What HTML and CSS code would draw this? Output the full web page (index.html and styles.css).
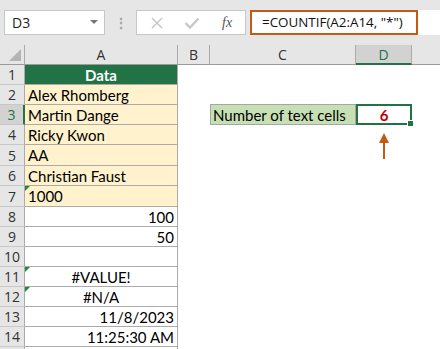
FILE: index.html
```html
<!DOCTYPE html>
<html lang="en">
  <head>
    <meta charset="UTF-8" />
    <title>COUNTIF text cells</title>
    <link rel="stylesheet" href="styles.css">
  </head>
  <body>
    <div class="formula-bar">
      <div class="name-box">
        <span>D3</span>
        <span class="caret"></span>
      </div>
      <div class="grip">⋮</div>
      <div class="fx-buttons">
        <svg class="btn-icon" width="14" height="14" viewBox="0 0 14 14">
          <path d="M2 2 L12 12 M12 2 L2 12" stroke="#c8c8c8" stroke-width="1.5" fill="none" />
        </svg>
        <svg class="btn-icon" width="16" height="14" viewBox="0 0 16 14">
          <path d="M1.5 7 L6 11.5 L14.5 2.5" stroke="#c8c8c8" stroke-width="2.4" fill="none" />
        </svg>
        <span class="fx">fx</span>
      </div>
      <div class="formula-input">
        <div class="formula-text">=COUNTIF(A2:A14, "*")</div>
      </div>
    </div>

    <div class="sheet">
      <!-- column headers -->
      <div class="corner"><span class="corner-tri"></span></div>
      <div class="col-head">A</div>
      <div class="col-head">B</div>
      <div class="col-head">C</div>
      <div class="col-head active">D</div>
      <div class="col-head last"></div>

      <!-- row 1 -->
      <div class="row-head">1</div>
      <div class="cell a title">Data</div>
      <div class="cell"></div><div class="cell"></div><div class="cell"></div><div class="cell"></div>

      <!-- row 2 -->
      <div class="row-head">2</div>
      <div class="cell a text">Alex Rhomberg</div>
      <div class="cell"></div><div class="cell"></div><div class="cell"></div><div class="cell"></div>

      <!-- row 3 -->
      <div class="row-head active">3</div>
      <div class="cell a text">Martin Dange</div>
      <div class="cell"></div>
      <div class="cell label">Number of text cells</div>
      <div class="cell result">6<span class="handle"></span></div>
      <div class="cell"></div>

      <!-- row 4 -->
      <div class="row-head">4</div>
      <div class="cell a text">Ricky Kwon</div>
      <div class="cell"></div><div class="cell"></div>
      <div class="cell arrow-cell">
        <svg width="12" height="26" viewBox="0 0 12 26">
          <path d="M6 0 L11 10 L1 10 Z" fill="#c55a11" />
          <rect x="5" y="9" width="2" height="17" fill="#c55a11" />
        </svg>
      </div>
      <div class="cell"></div>

      <!-- row 5 -->
      <div class="row-head tall">5</div>
      <div class="cell a text">AA</div>
      <div class="cell"></div><div class="cell"></div><div class="cell"></div>

      <!-- row 6 -->
      <div class="row-head">6</div>
      <div class="cell a text">Christian Faust</div>
      <div class="cell"></div><div class="cell"></div><div class="cell"></div><div class="cell"></div>

      <!-- row 7 -->
      <div class="row-head tall">7</div>
      <div class="cell a text flag">1000</div>
      <div class="cell"></div><div class="cell"></div><div class="cell"></div><div class="cell"></div>

      <!-- row 8 -->
      <div class="row-head">8</div>
      <div class="cell a right">100</div>
      <div class="cell"></div><div class="cell"></div><div class="cell"></div><div class="cell"></div>

      <!-- row 9 -->
      <div class="row-head">9</div>
      <div class="cell a right">50</div>
      <div class="cell"></div><div class="cell"></div><div class="cell"></div><div class="cell"></div>

      <!-- row 10 -->
      <div class="row-head">10</div>
      <div class="cell a"></div>
      <div class="cell"></div><div class="cell"></div><div class="cell"></div><div class="cell"></div>

      <!-- row 11 -->
      <div class="row-head">11</div>
      <div class="cell a center flag">#VALUE!</div>
      <div class="cell"></div><div class="cell"></div><div class="cell"></div><div class="cell"></div>

      <!-- row 12 -->
      <div class="row-head">12</div>
      <div class="cell a center flag">#N/A</div>
      <div class="cell"></div><div class="cell"></div><div class="cell"></div><div class="cell"></div>

      <!-- row 13 -->
      <div class="row-head">13</div>
      <div class="cell a right">11/8/2023</div>
      <div class="cell"></div><div class="cell"></div><div class="cell"></div><div class="cell"></div>

      <!-- row 14 -->
      <div class="row-head">14</div>
      <div class="cell a right">11:25:30 AM</div>
      <div class="cell"></div><div class="cell"></div><div class="cell"></div><div class="cell"></div>

      <!-- row 15, only its top edge shows -->
      <div class="row-head"></div>
      <div class="cell a"></div>
      <div class="cell"></div><div class="cell"></div><div class="cell"></div><div class="cell"></div>
    </div>
  </body>
</html>
```

FILE: styles.css
```css
body {
  margin: 0;
  width: 440px;
  height: 349px;
  overflow: hidden;
  background-color: #e6e6e6;
  font-family: "Open Sans", "Noto Sans", sans-serif;
}
.formula-bar {
  display: flex;
  align-items: center;
  height: 45px;
  padding-left: 4px;
  box-sizing: border-box;
}
.name-box {
  display: flex;
  align-items: center;
  justify-content: space-between;
  width: 101px;
  height: 25px;
  box-sizing: border-box;
  padding: 0 6px 0 7px;
  background: white;
  border: 1px solid #c6c6c6;
  font-size: 14px;
  color: #222;
}
.caret {
  width: 0;
  height: 0;
  border-left: 4px solid transparent;
  border-right: 4px solid transparent;
  border-top: 4px solid #777;
  margin-top: -2px;
}
.grip {
  width: 31px;
  text-align: center;
  color: #a6a6a6;
  font-size: 14px;
  font-weight: bold;
}
.fx-buttons {
  display: flex;
  align-items: center;
  width: 110px;
  height: 25px;
  box-sizing: border-box;
  padding-left: 13px;
  gap: 20px;
  background: white;
  border: 1px solid #c6c6c6;
}
.fx {
  font-family: "Liberation Serif", serif;
  font-style: italic;
  font-size: 14px;
  color: #555;
  margin-left: 2px;
}
.formula-input {
  flex: 1;
  height: 25px;
  margin-left: 4px;
  background: white;
}
.formula-text {
  width: 168px;
  height: 25px;
  box-sizing: border-box;
  border: 2px solid #c55a11;
  padding-left: 10px;
  font-size: 13.4px;
  line-height: 21px;
  color: #111;
}

.sheet {
  display: grid;
  grid-template-columns: 25px 153px 32px 146px 56px 1fr;
  grid-template-rows: 20px 20px 20px 20px 20px 21px 20px 21px 20px 20px 20px 20px 20px 20px 20px 20px;
  background: white;
  font-family: Lato, "Liberation Sans", sans-serif;
  font-size: 15px;
  color: #000;
}
.corner {
  position: relative;
  background: #e6e6e6;
  border-right: 1px solid #ababab;
  border-bottom: 1px solid #9b9b9b;
}
.corner-tri {
  position: absolute;
  right: 3px;
  bottom: 3px;
  width: 0;
  height: 0;
  border-left: 12px solid transparent;
  border-bottom: 12px solid #b4b4b4;
}
.col-head {
  display: flex;
  align-items: center;
  justify-content: center;
  background: #e6e6e6;
  border-right: 1px solid #ababab;
  border-bottom: 1px solid #9b9b9b;
  font-family: "Open Sans", "Noto Sans", sans-serif;
  font-size: 14px;
  color: #333;
}
.col-head.active {
  background: #d2d2d2;
  border-bottom: 2px solid #217346;
  color: #217346;
}
.col-head.last {
  border-right: none;
}
.row-head {
  display: flex;
  align-items: center;
  justify-content: center;
  background: #e6e6e6;
  border-right: 1px solid #ababab;
  border-bottom: 1px solid #c8c8c8;
  font-family: "Open Sans", "Noto Sans", sans-serif;
  font-size: 14px;
  color: #333;
}
.row-head.active {
  background: #d2d2d2;
  border-right: 2px solid #217346;
  color: #217346;
}
.cell {
  position: relative;
  display: flex;
  align-items: center;
  min-width: 0;
  white-space: nowrap;
}
.cell.a {
  border-right: 1px solid #ababab;
  border-bottom: 1px solid #ababab;
  padding: 0 3px;
}
.cell.text {
  background: #fff2cc;
}
.cell.title {
  justify-content: center;
  background: #217346;
  color: white;
  font-weight: bold;
}
.cell.right {
  justify-content: flex-end;
}
.cell.center {
  justify-content: center;
}
.cell.flag::before {
  content: "";
  position: absolute;
  left: 0;
  top: 0;
  border-top: 5px solid #1e8a3c;
  border-right: 5px solid transparent;
}
.cell.label {
  background: #c6e0b4;
  border: 1px solid #a6a6a6;
  padding-left: 2px;
  margin-top: -1px;
}
.cell.result {
  justify-content: center;
  border: 2px solid #217346;
  margin: -1px 0 0 0;
  color: #c00000;
  font-weight: bold;
}
.handle {
  position: absolute;
  right: -4px;
  bottom: -4px;
  width: 5px;
  height: 5px;
  background: #217346;
  border: 1px solid white;
}
.arrow-cell {
  grid-row: span 2;
  align-items: flex-start;
  justify-content: center;
  padding-top: 8px;
}
```
